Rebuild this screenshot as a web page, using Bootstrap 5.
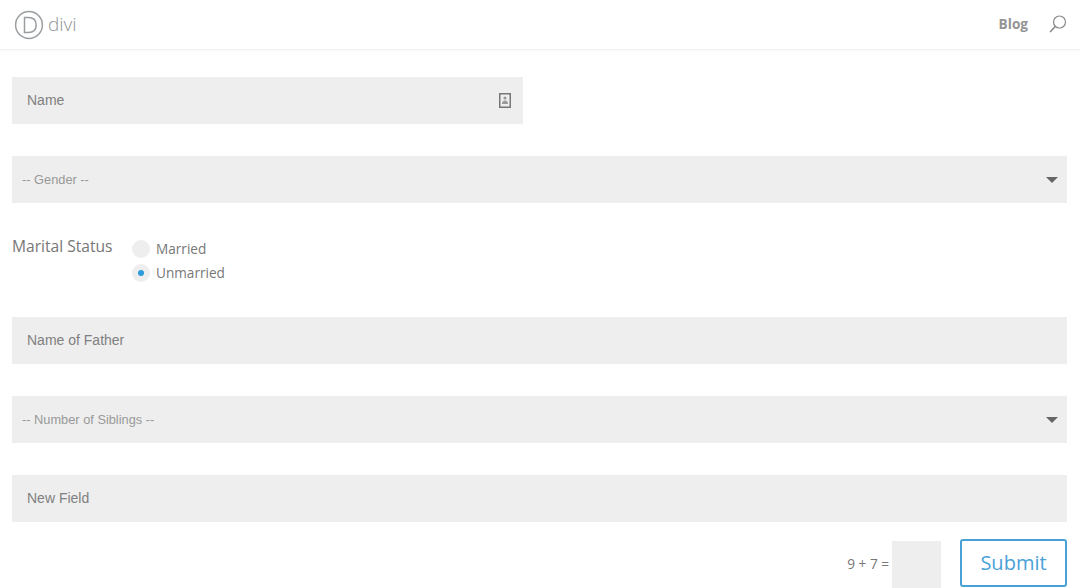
<!DOCTYPE html>
<html lang="en">
<head>
<meta charset="utf-8">
<title>Divi form</title>
<link href="https://cdn.jsdelivr.net/npm/bootstrap@5.3.0/dist/css/bootstrap.min.css" rel="stylesheet">
<style>
html,body{height:588px;overflow:hidden;background:#fff}
body{font-family:"Open Sans","Noto Sans",sans-serif;color:#666}
.topbar{height:50px;padding:0 13px 0 14px;border-bottom:1px solid #f1f1f1;box-shadow:0 1px 3px rgba(0,0,0,.03)}
.logo-word{font-family:"Open Sans",sans-serif;font-weight:300;font-size:19px;color:#8f9496;line-height:1}
.blog-link{font-size:13.6px;font-weight:700;color:#949494;text-decoration:none;margin-right:21px}
.form-area{padding:27px 13px 0 12px}
.fld{height:47px;background:#eee;font-family:"Liberation Sans",Arial,sans-serif;font-size:14px;color:#808080;padding-left:15px}
.fld-half{width:511px;padding-right:12px}
.fld-sel{font-size:12.8px;color:#999;padding-left:10px;padding-right:9px}
.caret-down{width:0;height:0;border-left:6px solid transparent;border-right:6px solid transparent;border-top:6px solid #666}
.gap-a{margin-top:32px}
.group-title{font-size:15.6px;color:#777;width:120px;line-height:22px}
.radio-list{padding-top:2px}
.radio-row{height:24px;font-size:13.6px;color:#777;gap:6px}
.radio-dot{width:18px;height:18px;border-radius:50%;background:#eee;flex:none}
.radio-dot.on::after{content:"";width:6px;height:6px;border-radius:50%;background:#2e9bdb}
.status-row{height:82px}
.captcha-text{font-size:13.6px;line-height:20px;color:#777;margin:15px 3px 0 0}
.captcha-box{width:49px;height:47px;background:#eee;margin:2px 19px 0 0}
.send-btn{width:107px;height:48px;border:2px solid #4aa1d8;border-radius:3px;color:#4aa1d8;font-size:20px;background:#fff;padding:0;line-height:1}
.send-btn:hover{color:#4aa1d8;border-color:#4aa1d8;background:#fff}
.last-row{margin-top:17px}
</style>
</head>
<body>
<nav class="topbar d-flex align-items-center justify-content-between">
  <div class="d-flex align-items-center gap-1">
    <svg width="30" height="30" viewBox="0 0 30 30" fill="none" stroke="#9a9ea1" aria-hidden="true">
      <circle cx="15" cy="15" r="13.4" stroke-width="1.5"/>
      <path d="M10.5 7.5h3.7c5.2 0 8 3.1 8 7.5s-2.8 7.5-8 7.5h-3.7z" stroke-width="1.5"/>
    </svg>
    <span class="logo-word">divi</span>
  </div>
  <div class="d-flex align-items-center">
    <a class="blog-link" href="#">Blog</a>
    <svg width="18" height="18" viewBox="0 0 18 18" fill="none" stroke="#8a8a8a" aria-hidden="true">
      <circle cx="10.5" cy="7" r="6" stroke-width="1.2"/>
      <path d="M6.3 11.5 1.5 16.5" stroke-width="1.7" stroke-linecap="round"/>
    </svg>
  </div>
</nav>
<main class="form-area">
  <div class="fld fld-half d-flex align-items-center justify-content-between">
    <span>Name</span>
    <svg width="12" height="15" viewBox="0 0 12 15" aria-hidden="true">
      <rect x=".75" y=".75" width="10.5" height="13.5" fill="none" stroke="#777" stroke-width="1.5"/>
      <circle cx="6" cy="5" r="1.6" fill="#999"/>
      <path d="M3 11c0-2.2 1.2-3.4 3-3.4s3 1.2 3 3.4z" fill="#999"/>
    </svg>
  </div>
  <div class="fld fld-sel gap-a d-flex align-items-center justify-content-between">
    <span>-- Gender --</span><span class="caret-down"></span>
  </div>
  <div class="status-row d-flex gap-a">
    <div class="group-title">Marital Status</div>
    <div class="radio-list">
      <div class="radio-row d-flex align-items-center"><span class="radio-dot"></span><span>Married</span></div>
      <div class="radio-row d-flex align-items-center"><span class="radio-dot on d-flex align-items-center justify-content-center"></span><span>Unmarried</span></div>
    </div>
  </div>
  <div class="fld d-flex align-items-center">Name of Father</div>
  <div class="fld fld-sel gap-a d-flex align-items-center justify-content-between">
    <span>-- Number of Siblings --</span><span class="caret-down"></span>
  </div>
  <div class="fld gap-a d-flex align-items-center">New Field</div>
  <div class="last-row d-flex justify-content-end align-items-start">
    <span class="captcha-text">9 + 7 =</span>
    <div class="captcha-box"></div>
    <button type="button" class="btn send-btn">Submit</button>
  </div>
</main>
<script src="https://cdn.jsdelivr.net/npm/bootstrap@5.3.0/dist/js/bootstrap.bundle.min.js"></script>
</body>
</html>
